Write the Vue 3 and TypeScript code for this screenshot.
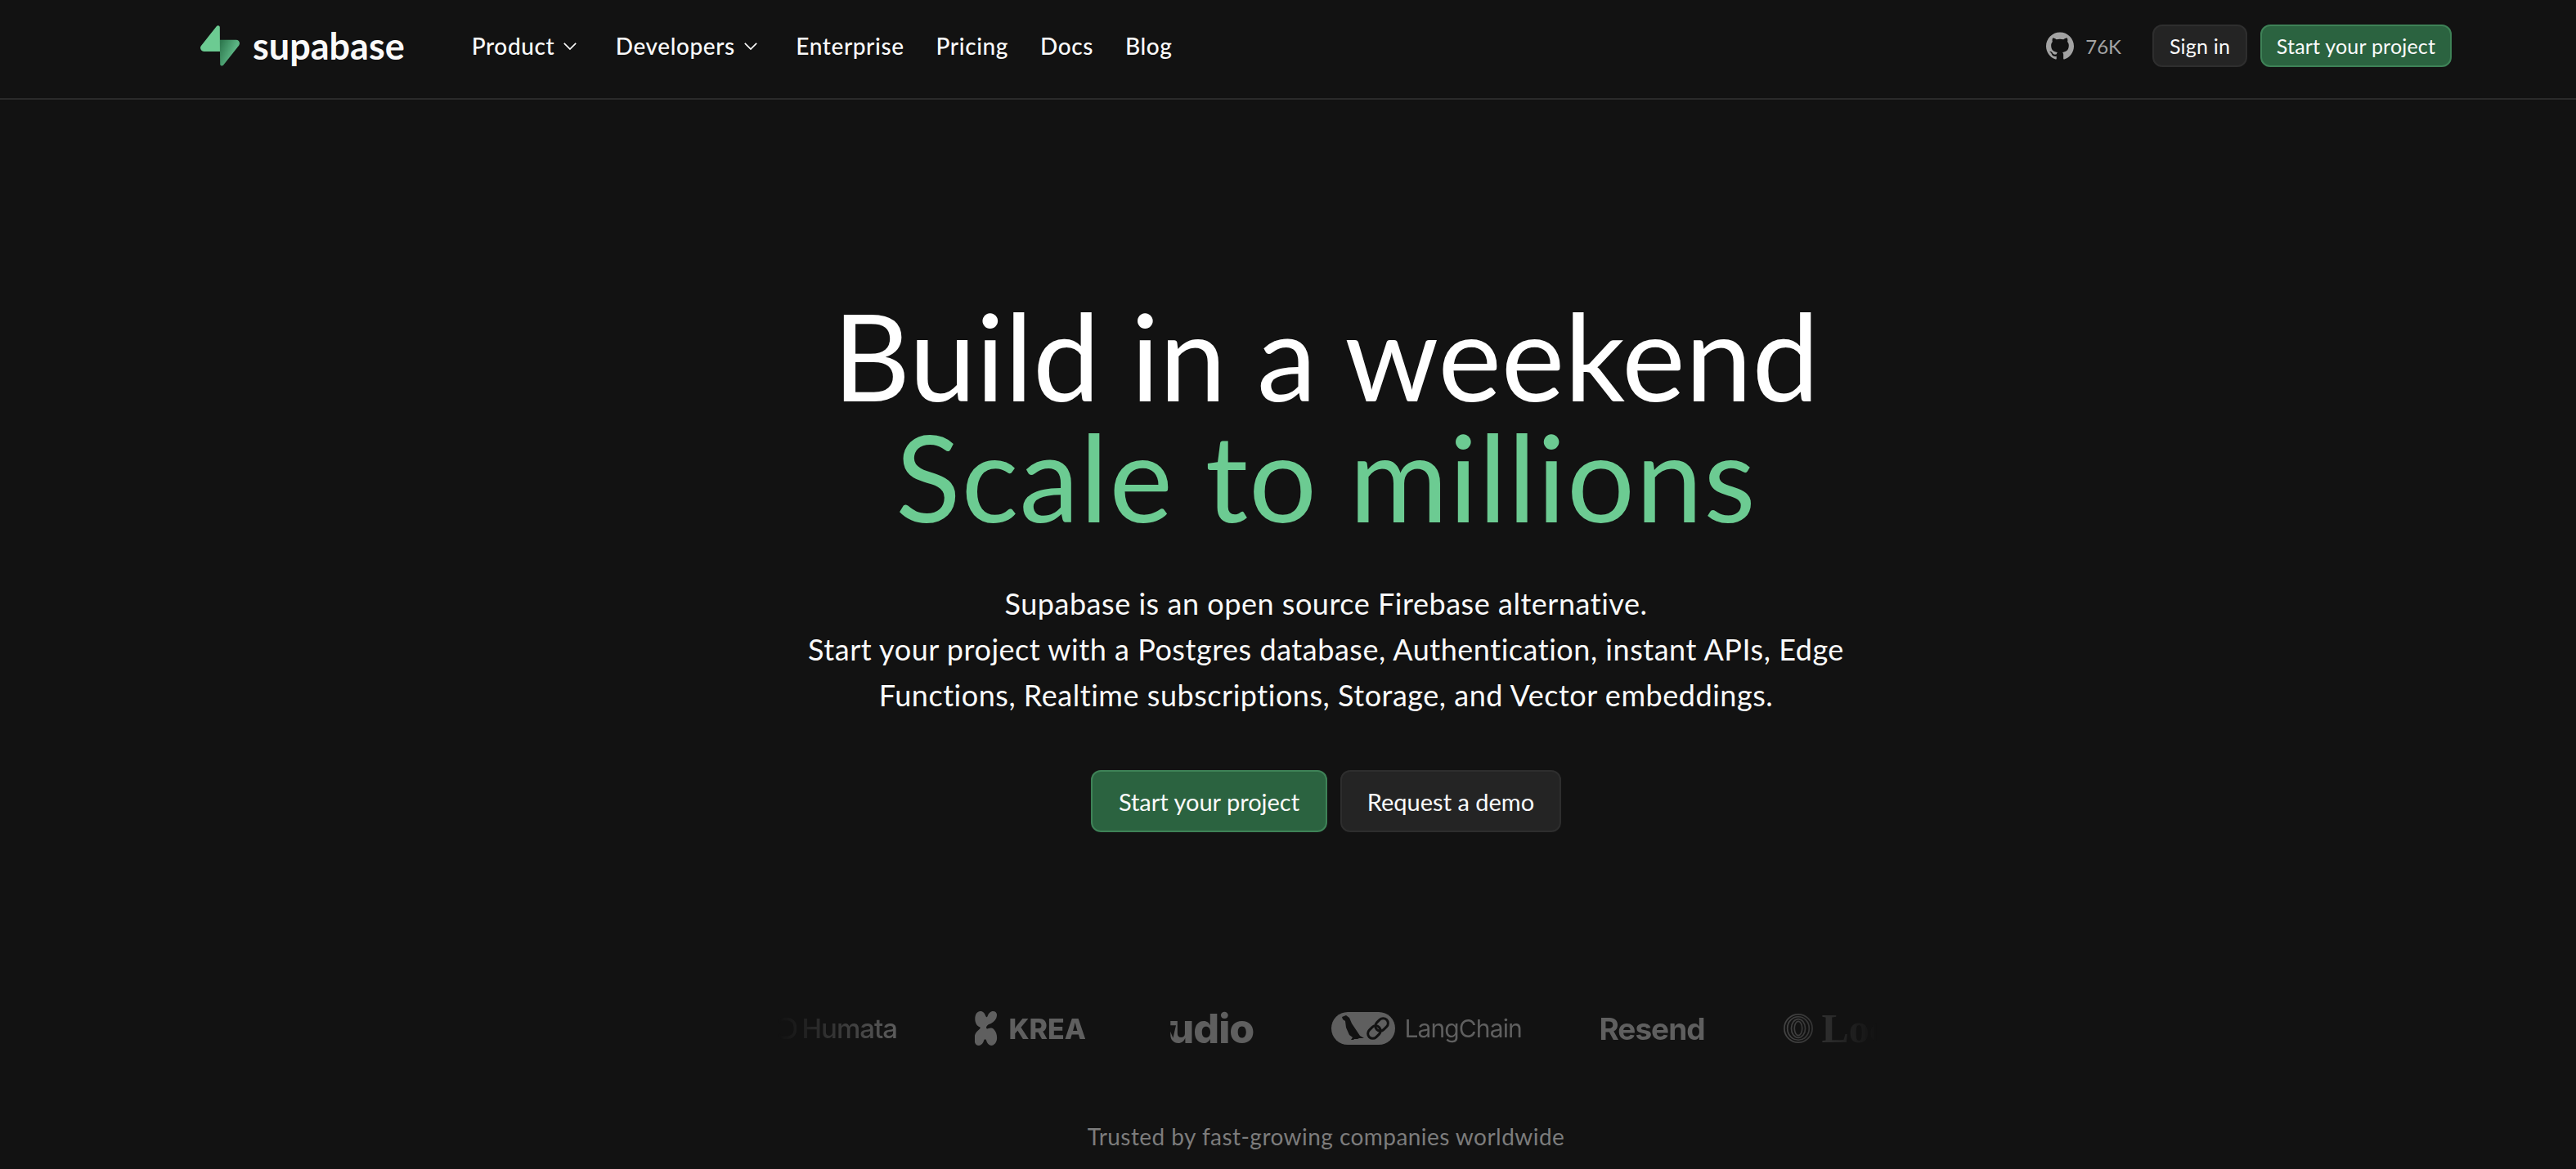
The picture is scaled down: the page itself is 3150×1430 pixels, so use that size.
<template>
  <div class="page">
    <header class="nav">
      <div class="nav-inner">
        <div class="nav-left">
          <a class="brand">
            <svg class="brand-mark" viewBox="0 0 109 113" fill="none">
              <path d="M63.7076 110.284C60.8481 113.885 55.0502 111.912 54.9813 107.314L53.9738 40.0627L99.1935 40.0627C107.384 40.0627 111.952 49.5228 106.859 55.9374L63.7076 110.284Z" fill="url(#markA)" />
              <path d="M45.317 2.07103C48.1765 -1.53037 53.9745 0.442937 54.0434 5.041L54.4849 72.2922H9.83113C1.64038 72.2922 -2.92775 62.8321 2.1655 56.4175L45.317 2.07103Z" fill="#6ccb92" />
              <defs>
                <linearGradient id="markA" x1="53.97" y1="54.97" x2="94.16" y2="71.83" gradientUnits="userSpaceOnUse">
                  <stop stop-color="#2f7a50" />
                  <stop offset="1" stop-color="#5cb584" />
                </linearGradient>
              </defs>
            </svg>
            <span class="brand-name">supabase</span>
          </a>
          <nav class="menu">
            <a v-for="item in menuItems" :key="item.label" class="menu-item" :class="{ 'has-caret': item.caret }">
              {{ item.label }}
              <svg v-if="item.caret" class="caret" viewBox="0 0 20 12" fill="none">
                <path d="M2 2l8 8 8-8" stroke="currentColor" stroke-width="1.8" />
              </svg>
            </a>
          </nav>
        </div>
        <div class="nav-right">
          <a class="stars">
            <svg class="gh" viewBox="0 0 24 24" fill="currentColor">
              <path d="M12 .297c-6.63 0-12 5.373-12 12 0 5.303 3.438 9.8 8.205 11.385.6.113.82-.258.82-.577 0-.285-.01-1.04-.015-2.04-3.338.724-4.042-1.61-4.042-1.61C4.422 18.07 3.633 17.7 3.633 17.7c-1.087-.744.084-.729.084-.729 1.205.084 1.838 1.236 1.838 1.236 1.07 1.835 2.809 1.305 3.495.998.108-.776.417-1.305.76-1.605-2.665-.3-5.466-1.332-5.466-5.93 0-1.31.465-2.38 1.235-3.22-.135-.303-.54-1.523.105-3.176 0 0 1.005-.322 3.3 1.23.96-.267 1.98-.399 3-.405 1.02.006 2.04.138 3 .405 2.28-1.552 3.285-1.23 3.285-1.23.645 1.653.24 2.873.12 3.176.765.84 1.23 1.91 1.23 3.22 0 4.61-2.805 5.625-5.475 5.92.42.36.81 1.096.81 2.22 0 1.606-.015 2.896-.015 3.286 0 .315.21.69.825.57C20.565 22.092 24 17.592 24 12.297c0-6.627-5.373-12-12-12" />
            </svg>
            <span>76K</span>
          </a>
          <button class="btn btn-dark btn-sm btn-signin">Sign in</button>
          <button class="btn btn-green btn-sm btn-start">Start your project</button>
        </div>
      </div>
    </header>

    <main class="hero">
      <h1 class="title">Build in a weekend<br /><span class="accent">Scale to millions</span></h1>
      <p class="lead">
        Supabase is an open source Firebase alternative.<br />
        Start your project with a Postgres database, Authentication, instant APIs, Edge<br />
        Functions, Realtime subscriptions, Storage, and Vector embeddings.
      </p>
      <div class="cta">
        <button class="btn btn-green btn-lg btn-start-lg">Start your project</button>
        <button class="btn btn-dark btn-lg btn-demo">Request a demo</button>
      </div>

      <div class="logos">
        <div class="logo-track">
          <span class="logo humata">
            <svg class="humata-mark" viewBox="0 0 40 40" fill="none"><rect x="4" y="4" width="32" height="32" rx="13" stroke="currentColor" stroke-width="5" /></svg>
            <span>Humata</span>
          </span>
          <span class="logo krea">
            <svg class="krea-mark" viewBox="0 0 30 46" fill="currentColor">
              <path d="M7 0c4 0 6 3 7 6 1 2 2 3 3 0 1-3 4-6 7-6 4 0 6 3 5 7-1 5-5 8-9 10-3 1-5 3-5 5 0 1 1 2 3 1 2-1 5-1 7 1 4 4 5 10 4 15-1 4-4 7-7 7-4 0-6-4-7-7-1-2-2-2-3 0-1 3-3 7-7 7-4 0-6-4-6-9 0-6 3-10 6-12 2-2 3-3 1-4C3 20 0 16 0 10 0 4 3 0 7 0z" />
            </svg>
            <span>KREA</span>
          </span>
          <span class="logo udio">
            <span class="udio-word">udio</span>
            <svg class="udio-cut" viewBox="0 0 14 22"><path d="M0 0h14L9 22z" fill="#121212" /></svg>
          </span>
          <span class="logo lang">
            <svg class="lang-mark" viewBox="0 0 78 40">
              <rect width="78" height="40" rx="20" fill="currentColor" />
              <path d="M13 6l5-2 4 3 3 7 10 15 5 3h-6l-2 1h-4l-1 1h-3l2-3-4-3-4-9-1-8-3-2z" fill="#121212" />
              <g transform="rotate(-45 57 20)" fill="none" stroke="#121212" stroke-width="3">
                <rect x="42" y="14" width="17" height="12" rx="6" />
                <rect x="55" y="14" width="17" height="12" rx="6" />
              </g>
            </svg>
            <span>LangChain</span>
          </span>
          <span class="logo resend">Resend</span>
          <span class="logo loc">
            <svg class="loc-mark" viewBox="0 0 40 40" fill="none" stroke="currentColor" stroke-width="1.8">
              <circle cx="20" cy="20" r="18" />
              <ellipse cx="20" cy="20" rx="14" ry="15" />
              <ellipse cx="20" cy="20" rx="9" ry="12" />
              <ellipse cx="20" cy="20" rx="5" ry="9" />
            </svg>
            <span>Loc</span>
          </span>
        </div>
      </div>

      <p class="trusted">Trusted by fast-growing companies worldwide</p>
    </main>
  </div>
</template>

<script setup lang="ts">
interface MenuItem {
  label: string
  caret: boolean
}

const menuItems: MenuItem[] = [
  { label: 'Product', caret: true },
  { label: 'Developers', caret: true },
  { label: 'Enterprise', caret: false },
  { label: 'Pricing', caret: false },
  { label: 'Docs', caret: false },
  { label: 'Blog', caret: false }
]
</script>

<style>
html, body {
  margin: 0;
  background: #121212;
  overflow: hidden;
}
</style>

<style scoped>
.page {
  width: 3150px;
  height: 1430px;
  overflow: hidden;
  background: #121212;
  color: #fafafa;
  font-family: Lato, "Noto Sans", sans-serif;
}

.nav {
  height: 120px;
  border-bottom: 2px solid #2a2a2a;
}

.nav-inner {
  box-sizing: border-box;
  height: 100%;
  padding: 0 152px 8px 245px;
  display: flex;
  align-items: center;
  justify-content: space-between;
}

.nav-left, .nav-right, .brand, .menu, .menu-item, .stars {
  display: flex;
  align-items: center;
}

.brand {
  gap: 16px;
}

.brand-mark {
  width: 48px;
  height: 50px;
}

.brand-name {
  font-size: 45px;
  font-weight: 700;
}

.menu {
  margin-left: 82px;
  gap: 39px;
  font-size: 28px;
  font-weight: 500;
  letter-spacing: 0.6px;
}

.menu-item.has-caret {
  gap: 10px;
  margin-right: 7.5px;
}

.caret {
  width: 18px;
  height: 11px;
}

.stars {
  gap: 14px;
  margin-right: 38px;
  color: #a3a3a3;
  font-size: 24px;
}

.gh {
  width: 34px;
  height: 34px;
}

.btn {
  box-sizing: border-box;
  border-radius: 12px;
  border: 2px solid;
  color: #fafafa;
  font-family: inherit;
  padding: 0;
}

.btn-dark {
  background: #242424;
  border-color: #2e2e2e;
}

.btn-green {
  background: #2b6340;
  border-color: #3e8257;
}

.btn-sm {
  height: 52px;
  font-size: 25px;
  letter-spacing: 0.2px;
}

.btn-signin {
  width: 116px;
  margin-right: 16px;
}

.btn-start {
  width: 234px;
}

.hero {
  padding: 238px 152px 0 245px;
  display: flex;
  flex-direction: column;
  align-items: center;
}

.title {
  margin: 0;
  font-size: 146.5px;
  line-height: 148px;
  font-weight: 400;
  text-align: center;
  color: #fff;
}

.accent {
  color: #6ccb92;
  letter-spacing: 1.2px;
}

.lead {
  margin: 54px 0 0;
  font-size: 36px;
  line-height: 56px;
  letter-spacing: 0.53px;
  text-align: center;
}

.cta {
  margin-top: 64px;
  display: flex;
  gap: 16px;
}

.btn-lg {
  height: 76px;
  font-size: 29px;
}

.btn-start-lg {
  width: 289px;
}

.btn-demo {
  width: 270px;
}

.logos {
  margin-top: 200px;
  width: 1400px;
  height: 80px;
  overflow: hidden;
  -webkit-mask-image: linear-gradient(to right, transparent 30px, #000 180px, #000 1200px, transparent 1373px);
  mask-image: linear-gradient(to right, transparent 30px, #000 180px, #000 1200px, transparent 1373px);
}

.logo-track {
  height: 100%;
  display: flex;
  align-items: center;
  padding-left: 25px;
  color: #5f5f5f;
  white-space: nowrap;
  font-family: Inter, sans-serif;
}

.logo {
  display: flex;
  align-items: center;
  flex: none;
}

.humata {
  gap: 6px;
  width: 245px;
  font-size: 33px;
  font-weight: 500;
  letter-spacing: -1px;
}

.humata-mark {
  width: 28px;
  height: 28px;
}

.krea {
  gap: 14px;
  width: 237px;
  font-size: 34px;
  font-weight: 800;
}

.krea-mark {
  width: 28px;
  height: 42px;
}

.udio {
  position: relative;
  width: 199px;
  font-size: 50px;
  font-weight: 800;
  letter-spacing: -1px;
}

.udio-cut {
  position: absolute;
  left: -1px;
  bottom: 18px;
  width: 10px;
  height: 16px;
}

.lang {
  gap: 12px;
  width: 328px;
  font-size: 30px;
  letter-spacing: -0.9px;
}

.lang-mark {
  width: 78px;
  height: 40px;
}

.resend {
  width: 224px;
  font-size: 37px;
  font-weight: 700;
  letter-spacing: -1px;
}

.loc {
  gap: 10px;
  font-family: "Liberation Serif", serif;
  font-size: 50px;
  font-weight: 700;
}

.loc-mark {
  width: 38px;
  height: 38px;
}

.trusted {
  margin: 72px 0 0;
  font-size: 28px;
  line-height: 40px;
  letter-spacing: 0.45px;
  color: #7c7c7c;
}
</style>
